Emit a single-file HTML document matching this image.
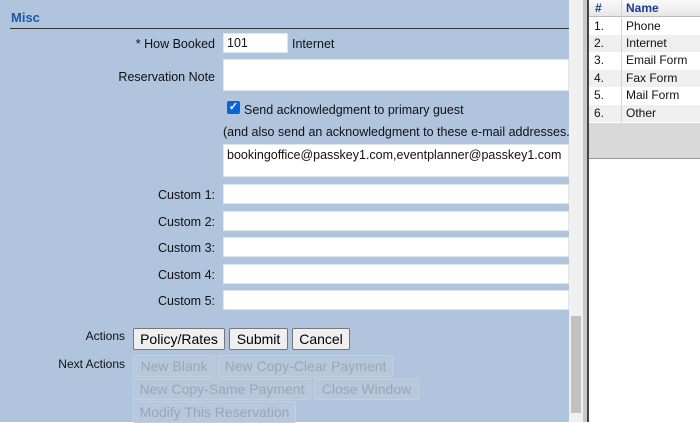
<!DOCTYPE html>
<html><head><meta charset="utf-8"><style>
*{margin:0;padding:0;box-sizing:border-box}
body{width:700px;height:422px;overflow:hidden;background:#fff;font-family:"Liberation Sans",Arial,sans-serif;font-size:12.5px;color:#111;position:relative}
.a{position:absolute}
#main{left:0;top:0;width:569px;height:422px;background:#b0c4de}
.lbl{position:absolute;text-align:right;width:215px;left:0;font-size:12.5px}
.in{position:absolute;background:#fff;border:1px solid #e0e6ee}
.btn{position:absolute;height:22px;border:1px solid #777;border-radius:2px;background:#efefef;font-size:14px;text-align:center;line-height:20px;color:#000}
.dis{position:absolute;height:22px;border:1px solid #c4cfdd;border-radius:2px;background:#b8c8dc;font-size:14px;text-align:center;line-height:20px;color:#9aa6b4}
.row{position:absolute;left:589px;width:111px;height:17px;font-size:12px;line-height:17px}
.row span{position:absolute}
</style></head><body>
<div id="main" class="a"></div>
<div class="a" style="left:11px;top:10px;font-weight:bold;color:#1a5aa6;font-size:13px">Misc</div>
<div class="a" style="left:10px;top:28px;width:559px;height:1px;background:#333"></div>

<div class="lbl" style="top:37px">* How Booked</div>
<div class="in" style="left:223px;top:33px;width:65px;height:20px;padding:2px 3px">101</div>
<div class="a" style="left:292px;top:37px">Internet</div>

<div class="lbl" style="top:70px">Reservation Note</div>
<div class="in" style="left:223px;top:59px;width:346px;height:32px"></div>

<div class="a" style="left:227px;top:101px;width:13px;height:13px;background:#0a64d8;border-radius:2px;color:#fff;font-size:11px;line-height:13px;text-align:center;font-weight:bold">✓</div>
<div class="a" style="left:244px;top:103px">Send acknowledgment to primary guest</div>
<div class="a" style="left:223px;top:125px;width:346px;overflow:hidden;white-space:nowrap">(and also send an acknowledgment to these e-mail addresses.</div>

<div class="in" style="left:223px;top:144px;width:346px;height:33px;padding:3px 3px;white-space:nowrap;overflow:hidden">bookingoffice@passkey1.com,eventplanner@passkey1.com</div>

<div class="lbl" style="top:188px">Custom 1:</div><div class="in" style="left:223px;top:184px;width:346px;height:20px"></div>
<div class="lbl" style="top:215px">Custom 2:</div><div class="in" style="left:223px;top:211px;width:346px;height:20px"></div>
<div class="lbl" style="top:241px">Custom 3:</div><div class="in" style="left:223px;top:237px;width:346px;height:20px"></div>
<div class="lbl" style="top:268px">Custom 4:</div><div class="in" style="left:223px;top:264px;width:346px;height:20px"></div>
<div class="lbl" style="top:294px">Custom 5:</div><div class="in" style="left:223px;top:290px;width:346px;height:20px"></div>

<div class="a" style="left:0;top:329px;width:125px;text-align:right;font-size:12px">Actions</div>
<div class="a" style="left:0;top:357px;width:125px;text-align:right;font-size:12px">Next Actions</div>
<div class="btn" style="left:133px;top:328px;width:92px">Policy/Rates</div>
<div class="btn" style="left:229px;top:328px;width:59px">Submit</div>
<div class="btn" style="left:292px;top:328px;width:58px">Cancel</div>
<div class="dis" style="left:133px;top:355px;width:82px">New Blank</div>
<div class="dis" style="left:218px;top:355px;width:175px">New Copy-Clear Payment</div>
<div class="dis" style="left:133px;top:378px;width:178px">New Copy-Same Payment</div>
<div class="dis" style="left:314px;top:378px;width:105px">Close Window</div>
<div class="dis" style="left:133px;top:401px;width:163px">Modify This Reservation</div>

<div class="a" style="left:569px;top:0;width:14px;height:422px;background:#f0f0f0"></div>
<div class="a" style="left:571px;top:316px;width:10px;height:97px;background:#c1c1c1"></div>
<div class="a" style="left:583px;top:0;width:4px;height:422px;background:#c8c8c8"></div>
<div class="a" style="left:587px;top:0;width:2px;height:422px;background:#444"></div>

<div class="a" style="left:589px;top:0;width:111px;height:17px;background:linear-gradient(#fafafa,#e6e6e6);border-bottom:1px solid #bbb"></div>
<div class="a" style="left:595px;top:1px;font-weight:bold;color:#1a3d8f;font-size:12px">#</div>
<div class="a" style="left:626px;top:1px;font-weight:bold;color:#1a3d8f;font-size:12px">Name</div>
<div class="row" style="top:18px;background:#fff"><span style="left:5px">1.</span><span style="left:37px">Phone</span></div>
<div class="row" style="top:35px;background:#efefef"><span style="left:5px">2.</span><span style="left:37px">Internet</span></div>
<div class="row" style="top:52px;background:#fff"><span style="left:5px">3.</span><span style="left:37px">Email Form</span></div>
<div class="row" style="top:70px;background:#efefef"><span style="left:5px">4.</span><span style="left:37px">Fax Form</span></div>
<div class="row" style="top:87px;background:#fff"><span style="left:5px">5.</span><span style="left:37px">Mail Form</span></div>
<div class="row" style="top:105px;background:#efefef"><span style="left:5px">6.</span><span style="left:37px">Other</span></div>
<div class="a" style="left:621px;top:0;width:1px;height:123px;background:#d4d4d4"></div>
<div class="a" style="left:589px;top:123px;width:111px;height:36px;background:#d9d9d9;border-bottom:1px solid #999"></div>
</body></html>
